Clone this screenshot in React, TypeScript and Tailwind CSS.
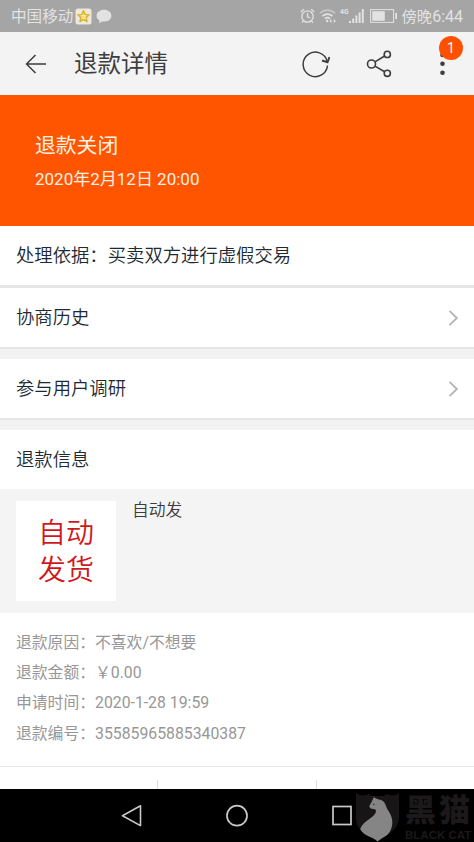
import * as React from "react";

type RowProps = {
    label: string;
    /** Show the chevron on the right side */
    arrow?: boolean;
};

const Row = ({ label, arrow }: RowProps) => (
    <div className="flex h-[59px] shrink-0 items-center justify-between bg-white pl-4 pr-[15px] text-[18.35px] font-[350] leading-none text-[#1d2a33]">
        <span className="whitespace-nowrap pt-[2px]">{label}</span>
        {arrow && (
            <svg width="11" height="18" viewBox="0 0 11 18" fill="none" stroke="#b3b3b3" strokeWidth="1.8">
                <path d="M1.5 1.8 8.9 9 1.5 16.2" />
            </svg>
        )}
    </div>
);

const Gap = () => <div className="h-3 shrink-0 border-t-2 border-[#e6e6e6] bg-[#f2f2f2]" />;

const StatusBar = () => (
    <div className="flex h-8 shrink-0 items-center bg-[#a5a5a5] pl-[11px] pr-[11px] text-[15.6px] leading-none text-[#e2e2e2]">
        <span className="whitespace-nowrap pt-[3px]">中国移动</span>
        <svg className="ml-[2px]" width="17" height="17" viewBox="0 0 17 17">
            <rect x="0.5" y="0.5" width="16" height="16" rx="2.5" fill="#ece8da" />
            <path
                d="M8.5 2.6 10.2 6.4 14.3 6.8 11.2 9.5 12.1 13.6 8.5 11.4 4.9 13.6 5.8 9.5 2.7 6.8 6.8 6.4Z"
                fill="#f0d574"
                stroke="#dcb32c"
                strokeWidth="1.3"
                strokeLinejoin="round"
            />
            <path d="M6.5 7.6h4L7 10.3h4" fill="none" stroke="#fff3c0" strokeWidth="0.8" />
        </svg>
        <svg className="ml-1" width="16" height="15" viewBox="0 0 16 15" fill="#e2e2e2">
            <path d="M8 .8C3.8.8.6 3.3.6 6.7c0 2 1.1 3.7 2.9 4.8L3 14.2l3.2-1.8c.6.1 1.2.2 1.8.2 4.2 0 7.4-2.6 7.4-5.9S12.2.8 8 .8Z" />
        </svg>
        <div className="ml-auto flex items-center">
            {/* alarm */}
            <svg width="15" height="16" viewBox="0 0 15 16" fill="none" stroke="#e2e2e2" strokeWidth="1.3">
                <circle cx="7.5" cy="8.5" r="5.7" />
                <path d="M7.5 5v3.8l2.6 1.2M.8 4 3.9 1.2M14.2 4l-3.1-2.8M3.6 12.8 2 14.7M11.4 12.8l1.6 1.9" />
            </svg>
            {/* wifi */}
            <svg className="ml-1" width="17" height="14" viewBox="0 0 17 14" fill="none" stroke="#e2e2e2" strokeWidth="1.6">
                <path d="M.9 4.3C5.2.1 11.8.1 16.1 4.3" stroke="#c6c6c6" />
                <path d="M3.5 7.2c2.9-2.8 7.1-2.8 10 0" />
                <path d="M5.9 9.9c1.5-1.4 3.7-1.4 5.2 0" />
                <circle cx="8.2" cy="12" r="1.2" fill="#e2e2e2" stroke="none" />
                <path d="m10.4 12 2-2v4ZM16.8 12l-2-2v4Z" fill="#e2e2e2" stroke="none" />
            </svg>
            <span className="mb-2 ml-1 w-[9px] origin-left scale-x-85 text-[8px] font-bold leading-none">4G</span>
            <svg width="15" height="16" viewBox="0 0 15 16" fill="#e2e2e2">
                <path d="M0 13h2v2H0zM3.2 10.5h2V15h-2zM6.400 7.500h2V15h-2zM9.600 4.500h2V15h-2zM12.800 1h2v14h-2z" />
            </svg>
            {/* battery */}
            <svg className="ml-[6px]" width="28" height="14" viewBox="0 0 28 14">
                <rect x="0.6" y="0.6" width="23" height="12.8" fill="none" stroke="#e2e2e2" />
                <rect x="2.2" y="2.2" width="12.6" height="9.6" fill="#e2e2e2" />
                <rect x="25.2" y="4" width="1.8" height="6" fill="#e2e2e2" />
            </svg>
            <span className="ml-1 whitespace-nowrap pt-[2px] text-[15.3px]">
                傍晚<span className="text-[16px]">6:44</span>
            </span>
        </div>
    </div>
);

const Header = () => (
    <header className="flex h-[63px] shrink-0 items-center bg-[#f3f3f3] text-[#3d3d3d]">
        <svg className="ml-[25px]" width="22" height="20" viewBox="0 0 22 20" fill="none" stroke="currentColor" strokeWidth="1.5">
            <path d="M21 10H1.8M10.5 1 1.5 10l9 9" />
        </svg>
        <h1 className="ml-[27px] whitespace-nowrap pt-[3px] text-[23.5px] leading-none">退款详情</h1>
        <div className="relative ml-auto mr-[18px] flex items-center">
            {/* refresh */}
            <svg width="28" height="28" viewBox="0 0 28 28" fill="none" stroke="currentColor" strokeWidth="1.5">
                <path d="M25.500 15.500A12.200 12.200 0 1 1 25.200 11.500" />
                <path d="M20 10.500 25.500 12.300 27.500 7" strokeWidth="2" />
            </svg>
            {/* share */}
            <svg className="ml-9" width="26" height="28" viewBox="0 0 26 28" fill="none" stroke="currentColor" strokeWidth="1.6">
                <circle cx="5.5" cy="14" r="4" />
                <circle cx="21.3" cy="4.4" r="3.1" />
                <circle cx="21.3" cy="23.3" r="3.1" />
                <path d="M9 11.9 18.6 6M9 16.1l9.6 5.6" />
            </svg>
            <svg className="ml-[38px]" width="26" height="28" viewBox="0 0 26 28" fill="currentColor">
                <circle cx="12.5" cy="5" r="2.3" />
                <circle cx="12.5" cy="13.700" r="2.3" />
                <circle cx="12.5" cy="22.700" r="2.3" />
            </svg>
            <span className="absolute right-[-7px] top-[-14px] flex size-6 items-center justify-center rounded-full bg-[#ff5000] pt-px text-[14px] leading-none text-white">
                1
            </span>
        </div>
    </header>
);

const details = [
    { label: "退款原因：", value: "不喜欢/不想要" },
    { label: "退款金额：", value: "￥0.00" },
    { label: "申请时间：", value: "2020-1-28 19:59" },
    { label: "退款编号：", value: "35585965885340387" },
];

const NavBar = () => (
    <nav className="relative flex h-[53px] shrink-0 justify-center gap-[82px] bg-black pt-[15px]">
        <svg width="22" height="24" viewBox="0 0 22 24" fill="none" stroke="#c9c9c9" strokeWidth="1.6" strokeLinejoin="round">
            <path d="M19.5 1.8v19.8L1.5 11.7Z" />
        </svg>
        <svg width="24" height="24" viewBox="0 0 24 24" fill="none" stroke="#c9c9c9" strokeWidth="1.7">
            <circle cx="12" cy="11.7" r="10" />
        </svg>
        <svg width="22" height="24" viewBox="0 0 22 24" fill="none" stroke="#c9c9c9" strokeWidth="1.7">
            <rect x="2" y="2.5" width="18" height="18" />
        </svg>
        {/* watermark */}
        <div className="absolute right-0 top-0 flex h-[53px] w-[118px] overflow-hidden">
            <svg className="shrink-0" width="44" height="53" viewBox="0 0 44 53">
                <path d="M0 4c4 3 9 3 13 1l4 2h10l4-2c4 2 8 2 12-1v25c0 9-8 16-22 23C8 46 0 39 0 30Z" fill="#171515" />
                <path
                    d="M18.3 7.5C17 9.5 16.4 11.5 15.3 13.5L13.3 17c.2 2 2 3.2 4.2 3 2.2.1 3 1.3 2.2 3.5C17.5 29.5 7.5 31 4.2 40c3.500 7.500 13 7.500 17.300 12.500 4.500-3.800 10-5.500 12.500-10 4-7 2.500-15-1.500-20.500-2.500-3.500-2.500-7-5-9.500-1.500-1.300-3-1.800-4.800-2-1.500-.5-3.500-1.200-5.400-3Z"
                    fill="#858585"
                />
                <path d="m16.4 14.8 2.8.3-1.6 1Z" fill="#2a2828" />
            </svg>
            <div className="ml-[5px] flex flex-col whitespace-nowrap text-[#1b1919]">
                <span className="h-[38px] pt-[6px] text-[31px] font-black leading-[32px] tracking-[3px]">黑猫</span>
                <span className="h-[15px] pt-px font-[Liberation_Sans] text-[11.5px] font-bold leading-[14px]">BLACK CAT</span>
            </div>
        </div>
    </nav>
);

const App = () => (
    <div className="flex h-[842px] w-[474px] flex-col overflow-hidden bg-white font-[Roboto,'Noto_Sans_CJK_SC',sans-serif]">
        <StatusBar />
        <Header />
        <section className="flex h-[131px] shrink-0 flex-col bg-[#ff5500] pl-[35px] pt-[39px] text-[#fff1e4]">
            <span className="text-[20.8px] leading-[24px]">退款关闭</span>
            <span className="mt-[11px] text-[17px] leading-[20px]">2020年2月12日 20:00</span>
        </section>
        <Row label="处理依据：买卖双方进行虚假交易" />
        <div className="h-[3px] shrink-0 bg-[#e6e6e6]" />
        <Row label="协商历史" arrow />
        <Gap />
        <Row label="参与用户调研" arrow />
        <Gap />
        <Row label="退款信息" />
        <section className="flex h-[124px] shrink-0 bg-[#f4f4f4] pl-4 pt-3">
            <div className="flex size-[100px] flex-col items-center justify-center bg-white pb-[3px] font-['Noto_Sans_CJK_SC',sans-serif] text-[28px] font-[350] leading-[37px] text-[#d0181c]">
                <span>自动</span>
                <span>发货</span>
            </div>
            <span className="ml-4 text-[16.8px] font-[350] leading-[18px] text-[#3c3c3c]">自动发</span>
        </section>
        <dl className="flex h-[153px] shrink-0 flex-col pl-4 pt-[15px] text-[15.8px] leading-[30.2px] text-[#979797]">
            {details.map((item) => (
                <div key={item.label} className="flex whitespace-nowrap">
                    <dt>{item.label}</dt>
                    <dd>{item.value}</dd>
                </div>
            ))}
        </dl>
        <div className="grid h-[23px] shrink-0 grid-cols-[158px_159px_157px] border-t border-[#e6e6e6] pt-[13px]">
            <div className="border-r border-[#dedede]" />
            <div className="border-r border-[#dedede]" />
        </div>
        <NavBar />
    </div>
);

export default App;
